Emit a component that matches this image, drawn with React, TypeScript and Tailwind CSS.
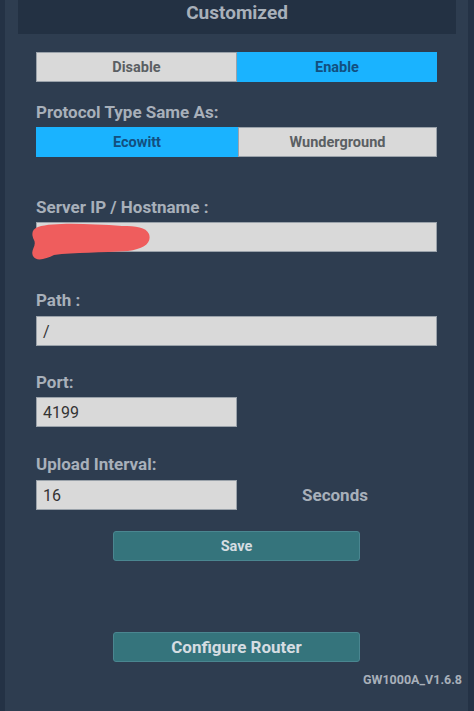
import React from 'react';

const font = { fontFamily: 'Roboto, "Noto Sans", Arial, sans-serif' };

function Label({ children, className = '' }: { children: React.ReactNode; className?: string }) {
  return (
    <div className={`h-5 leading-5 text-[17px] font-bold text-[#a8b0ba] ${className}`}>{children}</div>
  );
}

function Field({ value, wide = true }: { value: string; wide?: boolean }) {
  return (
    <div
      className={`h-[30px] ${wide ? 'w-[401px]' : 'w-[201px]'} bg-[#d9d9d9] border border-[#9aa2aa] flex items-center px-[6px] pt-px text-[16px] text-[#333]`}
    >
      {value}
    </div>
  );
}

export default function App() {
  return (
    <div style={font} className="w-[474px] h-[711px] overflow-hidden bg-[#243245] pl-[5px] pr-[6px]">
      <div className="h-full bg-[#2e3d50] flex flex-col">
        {/* header */}
        <div className="mx-[13px] mr-[12px] h-[34px] bg-[#233143] flex items-start justify-center">
          <span className="text-[19px] font-bold text-[#a8b0ba] leading-[26px]">Customized</span>
        </div>

        <div className="pl-[31px] flex flex-col">
          {/* enable toggle */}
          <div className="mt-[18px] flex w-[401px] h-[30px] text-[14.5px] font-bold">
            <div className="w-[201px] bg-[#d9d9d9] border border-[#9aa2aa] flex items-center justify-center pt-px text-[#5b5f63]">
              Disable
            </div>
            <div className="flex-1 bg-[#1ab3ff] flex items-center justify-center pt-px text-[#124f80]">Enable</div>
          </div>

          <Label className="mt-[20px] mb-[5px]">Protocol Type Same As:</Label>
          <div className="flex w-[401px] h-[30px] text-[14.5px] font-bold">
            <div className="w-[202px] bg-[#1ab3ff] flex items-center justify-center pt-px text-[#124f80]">Ecowitt</div>
            <div className="flex-1 bg-[#d9d9d9] border border-[#9aa2aa] flex items-center justify-center pt-px text-[#5b5f63]">
              Wunderground
            </div>
          </div>

          <Label className="mt-[40px] mb-[5px]">Server IP / Hostname :</Label>
          <div className="relative">
            <Field value="" />
            <svg className="absolute left-[-6px] top-0" width="124" height="40" viewBox="0 0 124 40">
              <path
                d="M8 5 C 25 0, 60 2, 92 4 C 106 4, 116 5, 119 12 C 122 21, 114 27, 98 29 C 72 31, 44 30, 24 33 C 16 37, 6 40, 3 34 C 0 28, 7 24, 4 18 C 1 12, 2 7, 8 5 Z"
                fill="#ef5d5d"
              />
            </svg>
          </div>

          <Label className="mt-[38px] mb-[6px]">Path :</Label>
          <Field value="/" />

          <Label className="mt-[26px] mb-[5px]">Port:</Label>
          <Field value="4199" wide={false} />

          <Label className="mt-[27px] mb-[6px]">Upload Interval:</Label>
          <div className="flex items-center">
            <Field value="16" wide={false} />
            <span className="ml-[65px] pt-px text-[17px] font-bold text-[#a8b0ba]">Seconds</span>
          </div>

          <button className="mt-[21px] ml-[77px] w-[247px] h-[30px] rounded-[3px] bg-[#35747c] border border-[#4a8690] pt-px text-[14.5px] font-bold text-[#d5dde2]">
            Save
          </button>

          <button className="mt-[71px] ml-[77px] w-[247px] h-[30px] rounded-[3px] bg-[#35747c] border border-[#4a8690] pt-px text-[17px] font-bold text-[#d5dde2]">
            Configure Router
          </button>
        </div>

        <div className="mt-[10px] pr-[6px] text-right text-[12.5px] font-bold leading-4 text-[#a8b0ba]">GW1000A_V1.6.8</div>
      </div>
    </div>
  );
}
